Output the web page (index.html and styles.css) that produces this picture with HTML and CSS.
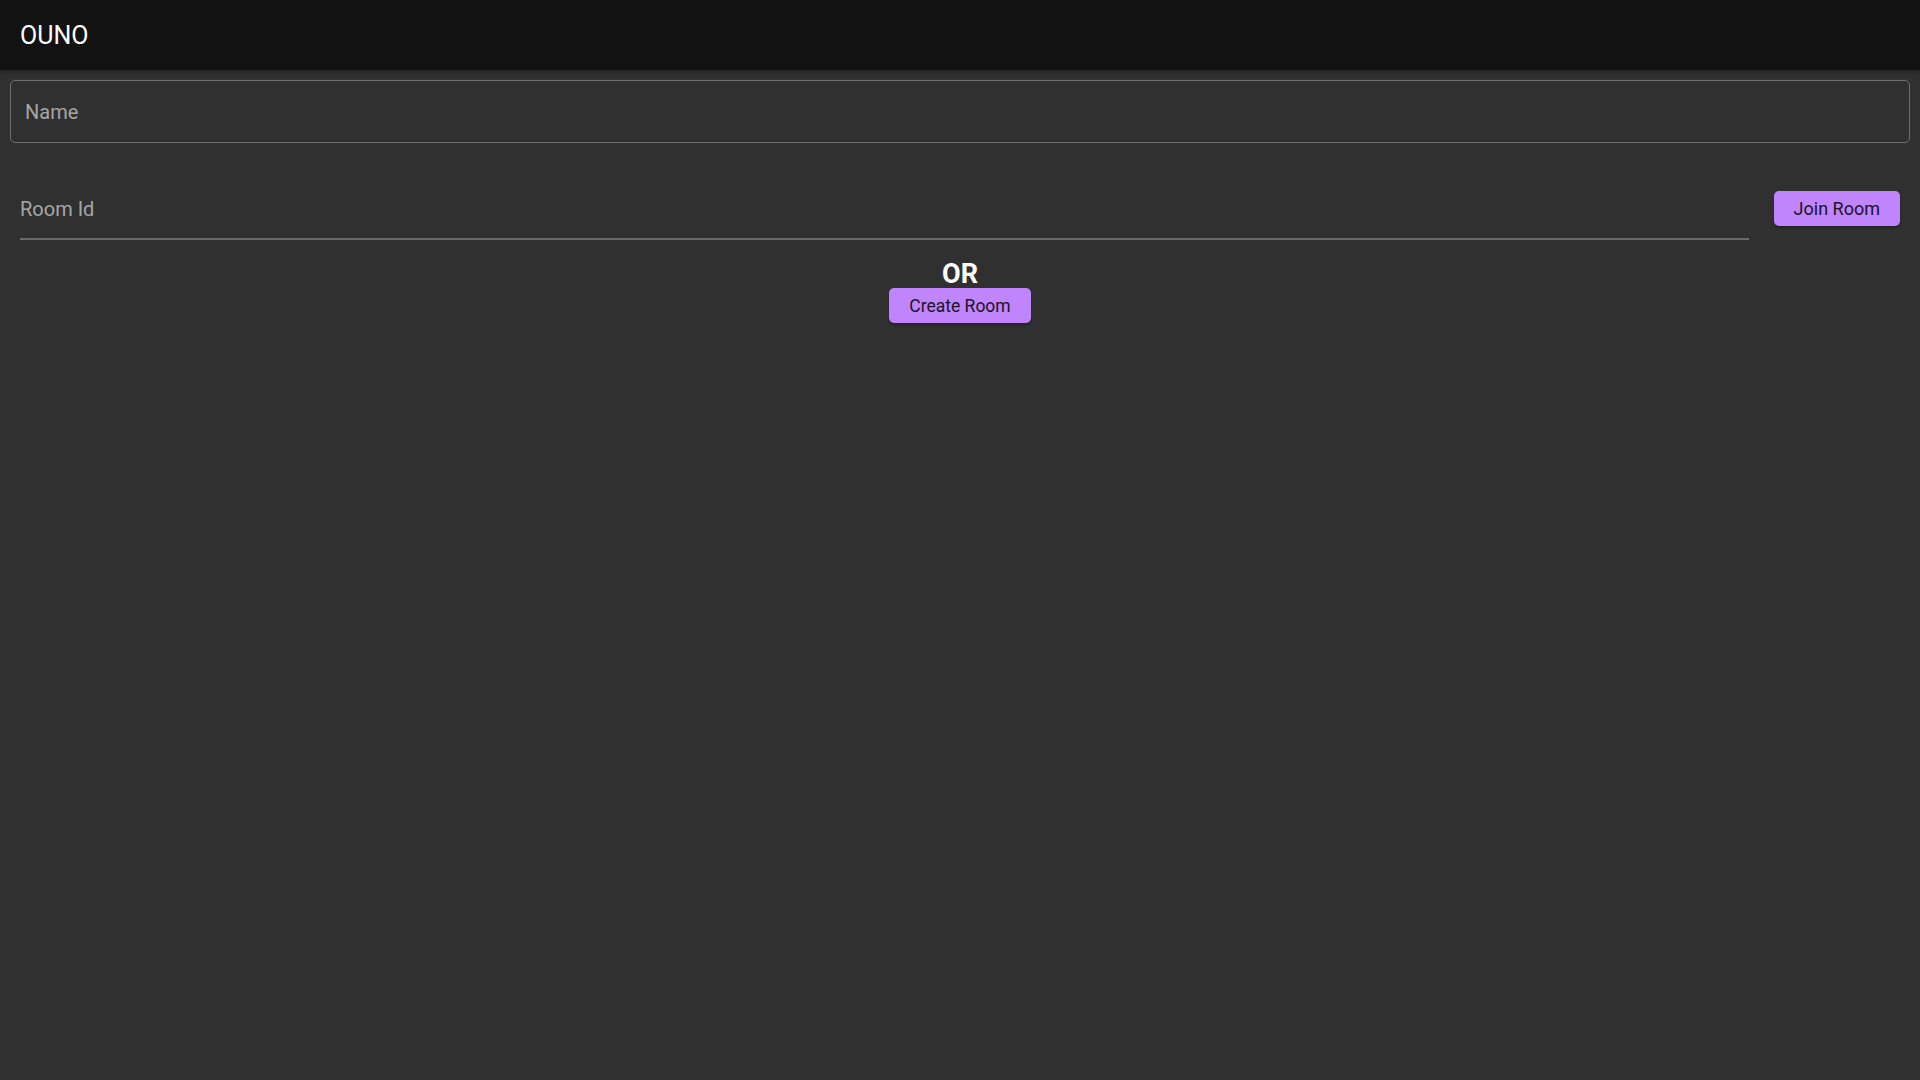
FILE: index.html
```html
<!DOCTYPE html>
<html lang="en">
<head>
<meta charset="utf-8">
<title>OUNO</title>
<link rel="stylesheet" href="styles.css">
</head>
<body>
<header class="appbar"><span class="brand">OUNO</span></header>
<main class="content">
  <div class="outlined-field"><input class="outlined-input" type="text" placeholder="Name"></div>
  <div class="join-row">
    <div class="standard-field"><input class="standard-input" type="text" placeholder="Room Id"></div>
    <button class="btn join-btn">Join Room</button>
  </div>
  <div class="or-block">
    <div class="or">OR</div>
    <button class="btn create-btn">Create Room</button>
  </div>
</main>
</body>
</html>
```
FILE: styles.css
```css
html, body {
  margin: 0;
  padding: 0;
  height: 100%;
}
body {
  background: #303030;
  font-family: Roboto, "Liberation Sans", sans-serif;
  color: #fff;
}
.appbar {
  height: 70px;
  background: #121212;
  display: flex;
  align-items: center;
  padding: 0 20px;
  box-shadow: 0 2px 4px rgba(0,0,0,0.3);
}
.brand {
  font-size: 25px;
  font-weight: 400;
  color: #fff;
}
.content {
  padding: 10px 10px 0 10px;
}
.outlined-field {
  height: 63px;
  box-sizing: border-box;
  border: 1.5px solid #6e6e6e;
  border-radius: 5px;
  display: flex;
  align-items: center;
  padding: 0 14px;
}
.outlined-input, .standard-input {
  background: transparent;
  border: none;
  outline: none;
  font-family: Roboto, "Liberation Sans", sans-serif;
  font-size: 20px;
  color: #fff;
  width: 100%;
  padding: 0;
}
.outlined-input::placeholder, .standard-input::placeholder {
  color: #a6a6a6;
  opacity: 1;
}
.join-row {
  display: flex;
  align-items: center;
  padding: 0 10px 0 10px;
  margin-top: 38px;
  gap: 25px;
}
.standard-field {
  flex: 1;
  height: 59px;
  box-sizing: border-box;
  border-bottom: 2px solid #6a6a6a;
  display: flex;
  align-items: center;
  padding-bottom: 2px;
}
.btn {
  background: #c084fc;
  color: #1c1326;
  border: none;
  border-radius: 5px;
  font-family: Roboto, "Liberation Sans", sans-serif;
  font-size: 18px;
  height: 35px;
  padding: 0 20px;
  cursor: pointer;
  box-shadow: 0 2px 2px rgba(0,0,0,0.25);
}
.join-btn {
  margin-bottom: 4px;
}
.or-block {
  display: flex;
  flex-direction: column;
  align-items: center;
  margin-top: 20px;
}
.or {
  font-size: 27px;
  font-weight: 700;
  line-height: 28px;
  color: #fff;
}
.create-btn {
  font-size: 17.5px;
  height: 35px;
  padding: 0 20px;
}
```
